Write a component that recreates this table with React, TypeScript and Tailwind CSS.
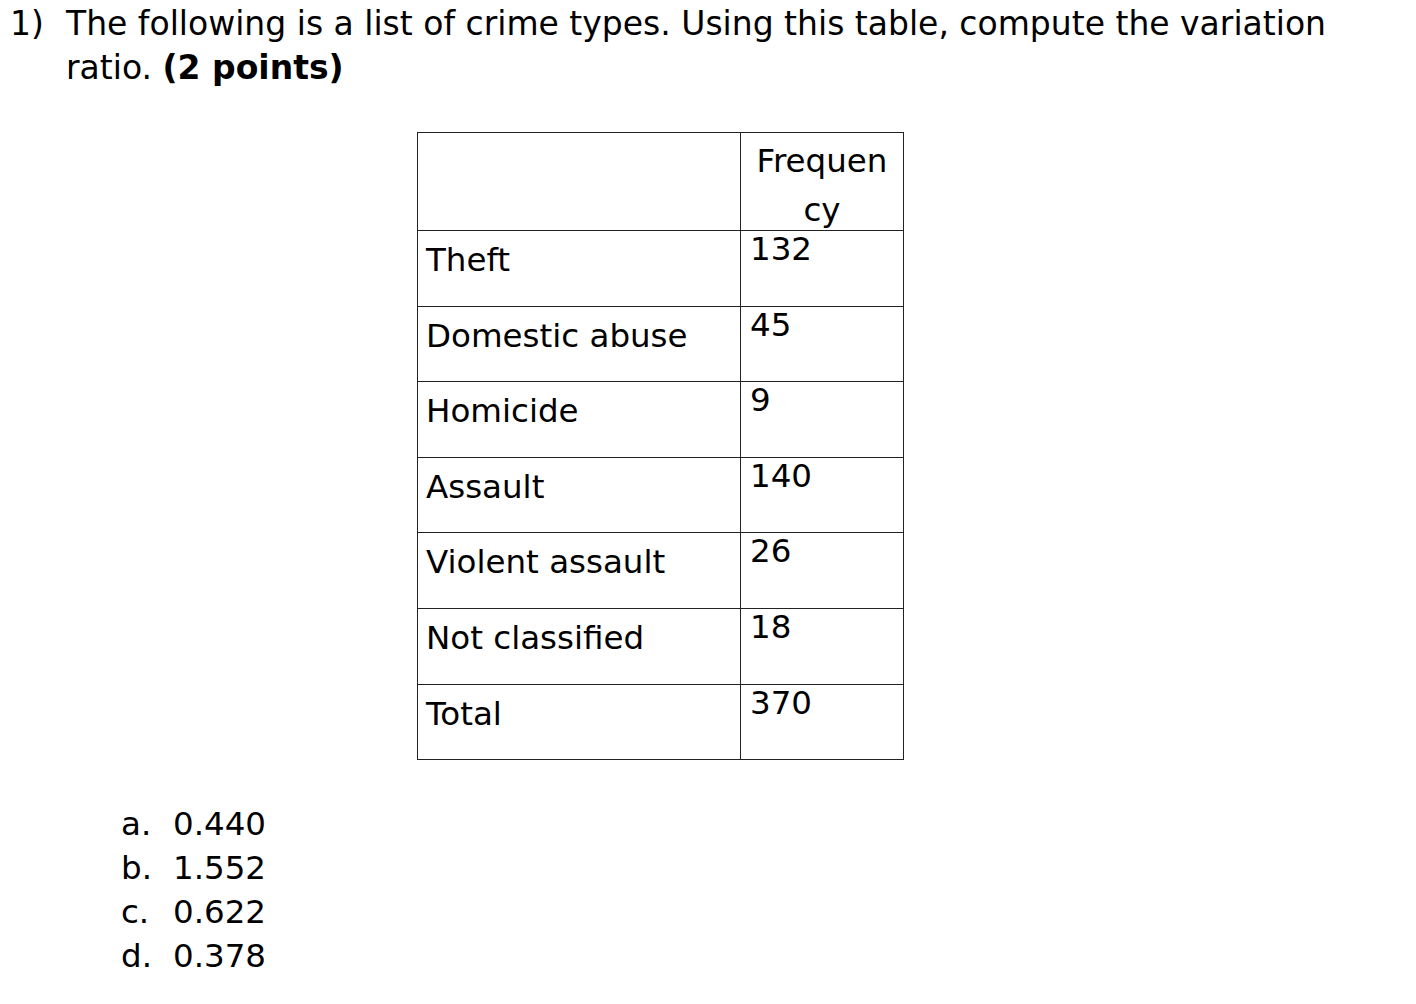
import React from 'react';

const rows = [
  { label: 'Theft', value: '132' },
  { label: 'Domestic abuse', value: '45' },
  { label: 'Homicide', value: '9' },
  { label: 'Assault', value: '140' },
  { label: 'Violent assault', value: '26' },
  { label: 'Not classified', value: '18' },
  { label: 'Total', value: '370' },
];

const options = [
  { key: 'a.', value: '0.440' },
  { key: 'b.', value: '1.552' },
  { key: 'c.', value: '0.622' },
  { key: 'd.', value: '0.378' },
];

const App = () => {
  return (
    <div className="min-h-screen bg-white text-black font-['DejaVu_Sans',sans-serif]">
      {/* Question */}
      <div className="flex pt-[2px] pl-[10px] text-[33px] leading-[44px]">
        <div className="w-[56px] shrink-0">1)</div>
        <div>
          The following is a list of crime types. Using this table, compute the variation
          <br />
          ratio. <span className="font-bold">(2 points)</span>
        </div>
      </div>

      {/* Table */}
      <div className="mt-[42px] pl-[417px]">
        <table className="border-collapse text-[32.5px]">
          <tbody>
            <tr className="h-[98px]">
              <td className="w-[323px] border border-[#222] p-0"></td>
              <td className="w-[163px] border border-[#222] px-2 pt-[6px] align-top text-center leading-[45px]">
                Frequen
                <br />
                <span className="relative top-[4px]">cy</span>
              </td>
            </tr>
            {rows.map(row => (
              <tr key={row.label} className="h-[75.6px]">
                <td className="border border-[#222] pl-[8px] pt-[5px] align-top leading-normal">
                  {row.label}
                </td>
                <td className="border border-[#222] pl-[9px] pt-[5px] align-top leading-[26px]">
                  {row.value}
                </td>
              </tr>
            ))}
          </tbody>
        </table>
      </div>

      {/* Answers */}
      <div className="mt-[42px] pl-[121px] text-[32.5px] leading-[44px]">
        {options.map(opt => (
          <div key={opt.key} className="flex">
            <span className="w-[52px] shrink-0">{opt.key}</span>
            <span>{opt.value}</span>
          </div>
        ))}
      </div>
    </div>
  );
};

export default App;
